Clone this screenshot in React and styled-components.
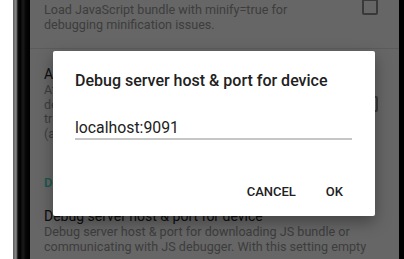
import React from "react";
import styled, { createGlobalStyle } from "styled-components";

const GlobalStyle = createGlobalStyle`
  html, body {
    margin: 0;
    padding: 0;
    background: #ffffff;
    font-family: Roboto, "Noto Sans", sans-serif;
    overflow: hidden;
  }
`;

const Page = styled.div`
  width: 404px;
  height: 259px;
  display: flex;
  padding-left: 13px;
  box-sizing: border-box;
`;

const LeftBezel = styled.div`
  width: 17px;
  flex-shrink: 0;
  background: linear-gradient(
    to right,
    #5e5e5e 0px,
    #7a7a7a 2px,
    #8c8c8c 3px,
    #4a4a4a 4px,
    #0c0c0c 5px,
    #000000 7px,
    #1a1a1a 10px,
    #050505 13px,
    #000000 17px
  );
`;

const RightBezel = styled.div`
  width: 5px;
  flex-shrink: 0;
  background: #000;
`;

const Screen = styled.div`
  position: relative;
  flex: 1;
  overflow: hidden;
  background: #ffffff;
`;

// scrolled list, offset = scroll position
const ScrollContent = styled.div`
  margin-top: ${(p) => -p.$offset}px;
`;

const Row = styled.div`
  display: flex;
  align-items: center;
  padding: 17px 21px 16px 14px;
  border-bottom: ${(p) => (p.$divider ? "1px solid #e6e6e6" : "none")};
`;

const RowText = styled.div`
  flex: 1;
  min-width: 0;
  padding-right: 12px;
`;

const RowTitle = styled.div`
  font-size: 14px;
  line-height: 17px;
  color: #262626;
  white-space: nowrap;
`;

const RowDesc = styled.div`
  margin-top: ${(p) => p.$gap || 0}px;
  font-size: 12.6px;
  line-height: 14.5px;
  color: #9a9a9a;
  white-space: pre;
`;

const Checkbox = styled.div`
  width: 12px;
  height: 12px;
  border: 2px solid #8e8e8e;
  border-radius: 2px;
  flex-shrink: 0;
`;

const SectionHeader = styled.div`
  padding: 18px 14px 0;
  font-size: 13px;
  line-height: 16px;
  font-weight: 500;
  color: #3fd9c1;
`;

const Scrim = styled.div`
  position: absolute;
  inset: 0;
  background: rgba(0, 0, 0, 0.6);
`;

const Dialog = styled.div`
  position: absolute;
  top: 51px;
  left: 23px;
  width: 322px;
  height: 165px;
  box-sizing: border-box;
  background: #ffffff;
  border-radius: 2px;
  box-shadow: 0 6px 16px rgba(0, 0, 0, 0.35);
  padding: 20px 24px 0 22px;
  display: flex;
  flex-direction: column;
`;

const DialogTitle = styled.div`
  font-size: 16px;
  line-height: 20px;
  font-weight: 500;
  color: #212121;
`;

const Field = styled.input`
  margin-top: 27px;
  margin-right: -1px;
  height: 20px;
  padding: 0;
  border: none;
  border-bottom: 2px solid #c6c6c6;
  outline: none;
  font-family: inherit;
  font-size: 15.8px;
  line-height: 20px;
  color: #212121;
  background: transparent;
`;

const Actions = styled.div`
  margin-top: 44px;
  display: flex;
  justify-content: flex-end;
  gap: 14px;
`;

const TextButton = styled.button`
  border: none;
  background: none;
  padding: 0 8px;
  font-family: inherit;
  font-size: 13px;
  line-height: 16px;
  font-weight: 500;
  color: #212121;
  cursor: pointer;
`;

export default function App() {
  return (
    <>
      <GlobalStyle />
      <Page>
        <LeftBezel />
        <Screen>
          <ScrollContent $offset={36}>
            <Row $divider>
              <RowText>
                <RowTitle>JS Minify</RowTitle>
                <RowDesc $gap={5}>
                  {"Load JavaScript bundle with minify=true for\ndebugging minification issues."}
                </RowDesc>
              </RowText>
              <Checkbox />
            </Row>
            <Row>
              <RowText>
                <RowTitle>Animations FPS Summaries</RowTitle>
                <RowDesc>
                  {"At the end of animations, Toasts and logcat\ndebug messages with FPS information will be\ntriggered for the animations that ran\n(animations must use the Animated API)"}
                </RowDesc>
              </RowText>
              <Checkbox />
            </Row>
            <SectionHeader>Debugging</SectionHeader>
            <Row>
              <RowText>
                <RowTitle>Debug server host &amp; port for device</RowTitle>
                <RowDesc>
                  {"Debug server host & port for downloading JS bundle or\ncommunicating with JS debugger. With this setting empty"}
                </RowDesc>
              </RowText>
            </Row>
          </ScrollContent>
          <Scrim />
          <Dialog>
            <DialogTitle>Debug server host &amp; port for device</DialogTitle>
            <Field defaultValue="localhost:9091" />
            <Actions>
              <TextButton>CANCEL</TextButton>
              <TextButton>OK</TextButton>
            </Actions>
          </Dialog>
        </Screen>
        <RightBezel />
      </Page>
    </>
  );
}
